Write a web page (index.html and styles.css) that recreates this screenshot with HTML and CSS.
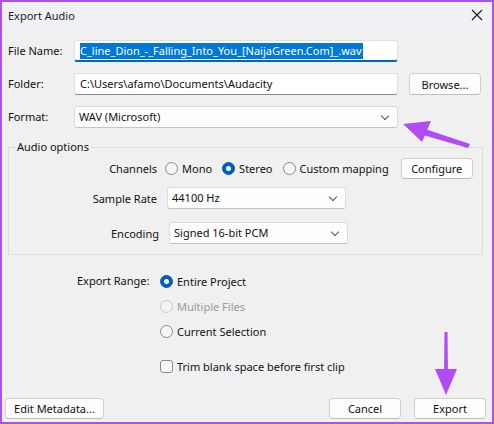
FILE: index.html
```html
<!DOCTYPE html>
<html>
<head>
<meta charset="utf-8">
<link rel="stylesheet" href="styles.css">
</head>
<body>
<div class="window">
  <div class="titlebar">
    <span class="title">Export Audio</span>
    <svg class="close" width="12" height="12" viewBox="0 0 12 12"><path d="M1 1 L11 11 M11 1 L1 11" stroke="#1a1a1a" stroke-width="1.1" fill="none"/></svg>
  </div>
  <div class="body">
    <div class="fields">
      <label class="lbl">File Name:</label>
      <div class="input focused"><span class="sel">C_line_Dion_-_Falling_Into_You_[NaijaGreen.Com]_.wav</span></div>
      <div></div>
      <label class="lbl">Folder:</label>
      <div class="input">C:\Users\afamo\Documents\Audacity</div>
      <button class="btn">Browse...</button>
      <label class="lbl">Format:</label>
      <div class="select">WAV (Microsoft)<span class="chev"></span></div>
      <div></div>
    </div>

    <fieldset class="group">
      <legend>Audio options</legend>
      <div class="orow r1">
        <span class="olbl">Channels</span>
        <div class="radios">
          <span class="opt"><span class="radio"></span>Mono</span>
          <span class="opt"><span class="radio on"></span>Stereo</span>
          <span class="opt"><span class="radio"></span>Custom mapping</span>
          <button class="btn cfg">Configure</button>
        </div>
      </div>
      <div class="orow r2">
        <span class="olbl">Sample Rate</span>
        <div class="select sm">44100 Hz<span class="chev"></span></div>
      </div>
      <div class="orow r3">
        <span class="olbl enc">Encoding</span>
        <div class="select sm enc">Signed 16-bit PCM<span class="chev"></span></div>
      </div>
    </fieldset>

    <div class="range">
      <span class="rlbl">Export Range:</span>
      <div class="ropts">
        <span class="opt"><span class="radio on"></span>Entire Project</span>
        <span class="opt disabled"><span class="radio"></span>Multiple Files</span>
        <span class="opt"><span class="radio"></span>Current Selection</span>
        <span class="opt trim"><span class="check"></span>Trim blank space before first clip</span>
      </div>
    </div>

    <div class="footer">
      <button class="btn meta">Edit Metadata...</button>
      <div class="right">
        <button class="btn fb">Cancel</button>
        <button class="btn fb">Export</button>
      </div>
    </div>
  </div>

  <svg class="arrows" width="494" height="424" viewBox="0 0 494 424">
    <polygon points="470,144 419,127 416,133 468,148" fill="#b14cf3"/>
    <polygon points="403,124 431,121 422,142" fill="#b14cf3"/>
    <polygon points="444.5,332 447.5,332 448,372 444,372" fill="#b14cf3"/>
    <polygon points="435,369 457,369 446,395" fill="#b14cf3"/>
  </svg>
</div>
</body>
</html>
```

FILE: styles.css
```css
* { box-sizing: border-box; }
html, body { margin: 0; padding: 0; }
body {
  width: 494px;
  height: 424px;
  font-family: "Noto Sans", "Open Sans", sans-serif;
  font-size: 11px;
  color: #111;
  background: #f0f0f0;
}
.window {
  position: relative;
  width: 494px;
  height: 424px;
  border: 2px solid #a952f2;
  background: #f0f0f0;
  display: flex;
  flex-direction: column;
}
.titlebar {
  height: 28px;
  background: #eff1f6;
  display: flex;
  align-items: center;
  justify-content: space-between;
  padding: 0 9px 2px 6px;
}
.title { color: #1a1a1a; }
.close { display: block; }
.body {
  flex: 1;
  display: flex;
  flex-direction: column;
  padding: 10px 6px 3px 6px;
}
.fields {
  display: grid;
  grid-template-columns: 55px 324px 72px;
  column-gap: 11px;
  row-gap: 11px;
  grid-auto-rows: 22px;
  align-items: center;
}
.lbl { line-height: 22px; white-space: nowrap; }
.input {
  height: 22px;
  background: #fff;
  border: 1px solid #e0e0e0;
  border-bottom: 1px solid #8a8a8a;
  border-radius: 3px;
  padding: 0 0 0 5px;
  line-height: 20px;
  white-space: nowrap;
  overflow: hidden;
}
.input.focused {
  border-bottom: 2px solid #0067c0;
}
.sel {
  background: #0078d7;
  color: #fff;
  display: inline-block;
  line-height: 16px;
  margin-top: 2px;
  padding-right: 1px;
}
.select {
  position: relative;
  height: 22px;
  background: #fdfdfd;
  border: 1px solid #dcdcdc;
  border-bottom-color: #c4c4c4;
  border-radius: 3px;
  padding-left: 4px;
  line-height: 20px;
}
.chev {
  position: absolute;
  right: 9px;
  top: 6px;
  width: 6px;
  height: 6px;
  border-right: 1px solid #555;
  border-bottom: 1px solid #555;
  transform: rotate(45deg);
}
.btn {
  font-family: inherit;
  font-size: 11px;
  color: #111;
  background: #fdfdfd;
  border: 1px solid #d0d0d0;
  border-bottom-color: #bdbdbd;
  border-radius: 4px;
  height: 22px;
  padding: 0;
  margin: 0;
}
.group {
  margin: 11px 3px 0 0;
  padding: 2px 0 10px 0;
  border: 1px solid #dcdcdc;
  border-radius: 0;
  min-width: 0;
}
.group legend {
  padding: 0 2px;
  margin-left: 6px;
  line-height: 16px;
}
.orow {
  display: flex;
  align-items: center;
  height: 22px;
}
.olbl {
  width: 148px;
  text-align: right;
  flex: none;
}
.olbl.enc { width: 150px; }
.r2 { margin-top: 8px; }
.r3 { margin-top: 13px; }
.radios {
  display: flex;
  align-items: center;
  margin-left: 8px;
}
.opt {
  display: inline-flex;
  align-items: center;
  white-space: nowrap;
}
.radios .opt { margin-right: 10px; }
.radios .opt:nth-child(3) { margin-right: 12px; }
.radio {
  width: 13px;
  height: 13px;
  border-radius: 50%;
  border: 1px solid #8a8a8a;
  background: #f6f6f6;
  margin-right: 4px;
  flex: none;
  position: relative;
}
.radio.on {
  background: #005fb8;
  border-color: #005fb8;
}
.radio.on::after {
  content: "";
  position: absolute;
  left: 3px;
  top: 3px;
  width: 5px;
  height: 5px;
  border-radius: 50%;
  background: #fff;
}
.cfg { width: 72px; height: 21px; }
.select.sm { width: 179px; margin-left: 10px; }
.range {
  display: grid;
  grid-template-columns: 83px 1fr;
  margin-top: 18px;
  padding-left: 69px;
}
.rlbl { line-height: 16px; }
.ropts { display: flex; flex-direction: column; }
.ropts .opt { height: 16px; margin-bottom: 9px; }
.ropts .opt.trim { margin-top: 10px; }
.opt.disabled { color: #9a9a9a; }
.opt.disabled .radio { border-color: #c8c8c8; background: #f3f3f3; }
.check {
  width: 13px;
  height: 13px;
  border: 1px solid #8a8a8a;
  border-radius: 3px;
  background: #f6f6f6;
  margin-right: 4px;
  flex: none;
}
.footer {
  margin-top: auto;
  display: flex;
  justify-content: space-between;
  margin-left: -3px;
}
.meta { width: 99px; height: 21px; }
.right { display: flex; gap: 13px; }
.fb { width: 72px; height: 21px; }
.arrows {
  position: absolute;
  left: -2px;
  top: -2px;
  pointer-events: none;
}
```
